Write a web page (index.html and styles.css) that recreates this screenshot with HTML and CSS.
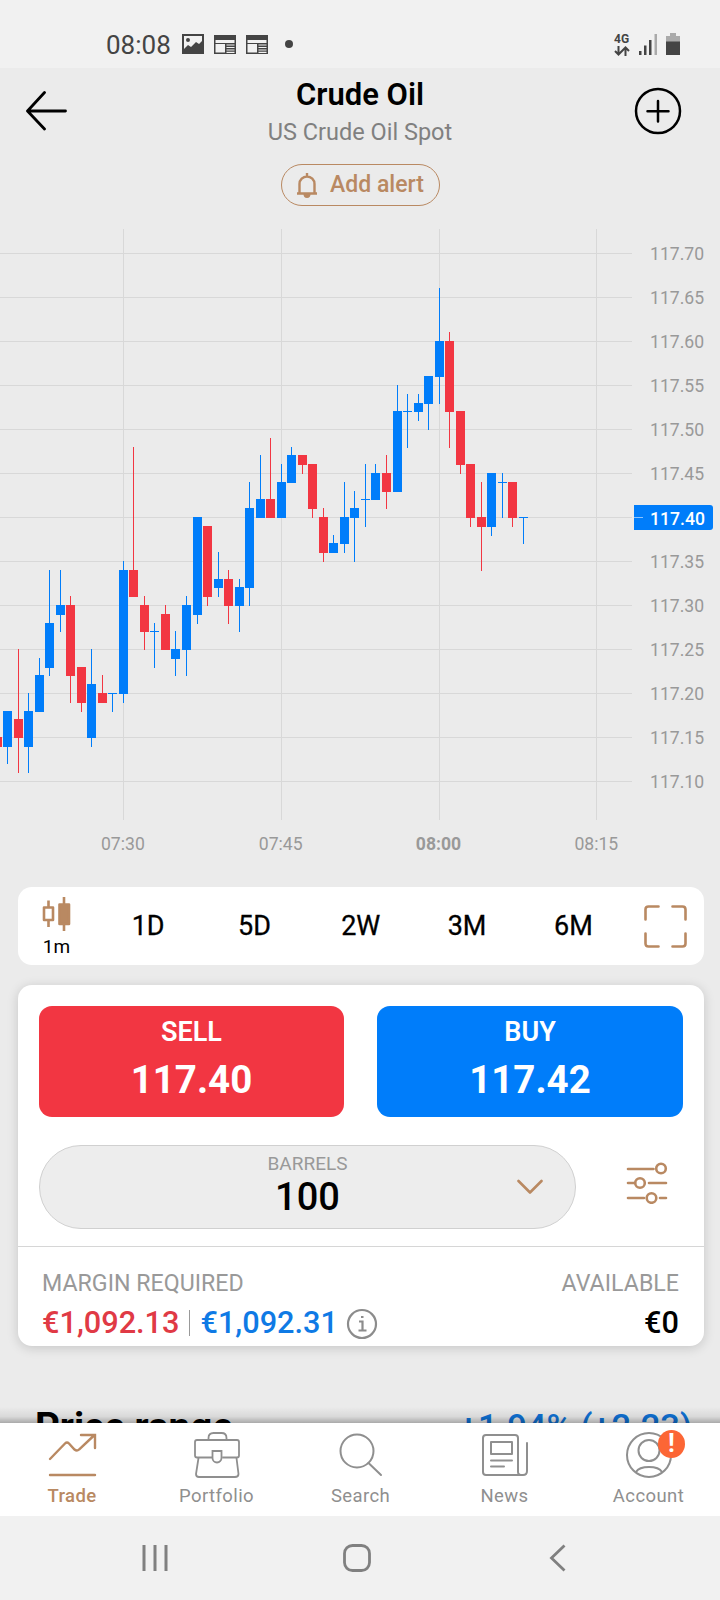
FILE: index.html
```html
<!DOCTYPE html>
<html lang="en">
<head>
    <meta charset="UTF-8">
    <meta name="viewport" content="width=device-width, initial-scale=1.0">
    <title>Crude Oil</title>
    <link rel="stylesheet" href="styles.css">
</head>
<body>
    <div class="status-bar">
        <div class="status-left">
            <span class="clock">08:08</span>
            <svg width="22" height="20" viewBox="0 0 22 20">
                <path fill="#444" fill-rule="evenodd" d="M0 0h22v20H0zM2 2v13l4-4 3 2 5-5 3 2 3-3V2zM4 6a2 2 0 1 0 4 0a2 2 0 1 0-4 0"/>
            </svg>
            <svg class="news-notice" width="22" height="19" viewBox="0 0 22 19">
                <path fill="#444" fill-rule="evenodd" d="M0 0h22v19H0zM1.500 5v3h19V5zM1.500 9v8.500H11V9z"/>
                <path stroke="#f1f1f1" stroke-width="1.200" d="M12.500 10h8M12.500 12.500h8M12.500 15h8M12.500 17.300h8"/>
            </svg>
            <svg class="news-notice" width="22" height="19" viewBox="0 0 22 19">
                <path fill="#444" fill-rule="evenodd" d="M0 0h22v19H0zM1.500 5v3h19V5zM1.500 9v8.500H11V9z"/>
                <path stroke="#f1f1f1" stroke-width="1.200" d="M12.500 10h8M12.500 12.500h8M12.500 15h8M12.500 17.300h8"/>
            </svg>
            <span class="dot"></span>
        </div>
        <div class="status-right">
            <div class="network">
                <span>4G</span>
                <svg width="16" height="10" viewBox="0 0 16 10" fill="none" stroke="#444" stroke-width="2">
                    <path d="M4.500 0v8M1 5l3.500 3.500L8 5M11.500 10V2M8 5l3.500-3.500L15 5"/>
                </svg>
            </div>
            <svg width="18" height="21" viewBox="0 0 18 21">
                <path fill="#444" d="M0 17h2.500v4H0zM5 11.500h2.500V21H5zM10 6h2.500v15H10z"/>
                <path fill="#aaa" d="M15.500 0H18v21h-2.500z"/>
            </svg>
            <svg width="14" height="22" viewBox="0 0 14 22">
                <path fill="#aaa" d="M4 0h6v3h4v6H0V3h4z"/>
                <path fill="#444" d="M0 8.500h14V22H0z"/>
            </svg>
        </div>
    </div>

    <main class="content">
        <div class="header">
            <svg class="back" width="42" height="42" viewBox="0 0 42 42" fill="none" stroke="#000" stroke-width="2.800" stroke-linecap="round" stroke-linejoin="round">
                <path d="M39.500 21H2M18.500 2.500L1.500 21l17 18"/>
            </svg>
            <div class="heading">
                <h1>Crude Oil</h1>
                <p>US Crude Oil Spot</p>
                <button class="alert-button">
                    <svg width="22" height="26" viewBox="0 0 22 26" fill="none" stroke="#b98962" stroke-width="2.400">
                        <path d="M1 20.500h20M3.500 20v-9a7.500 7.500 0 0 1 15 0v9M11 0v4"/>
                        <path fill="#b98962" stroke="none" d="M7.500 21h7a3.500 4 0 0 1-7 0z"/>
                    </svg>
                    Add alert
                </button>
            </div>
            <svg class="plus" width="48" height="48" viewBox="0 0 48 48" fill="none" stroke="#000" stroke-width="2.500" stroke-linecap="round">
                <circle cx="24" cy="24" r="22"/>
                <path d="M24 14v20.500M13.500 24.200h21"/>
            </svg>
        </div>

        <div class="chart">
            <svg id="plot" class="plot" width="633" height="591" viewBox="0 229 633 591" shape-rendering="crispEdges"></svg>
            <div class="price-axis">
                <span>117.70</span>
                <span>117.65</span>
                <span>117.60</span>
                <span>117.55</span>
                <span>117.50</span>
                <span>117.45</span>
                <span><b class="current-price">117.40</b></span>
                <span>117.35</span>
                <span>117.30</span>
                <span>117.25</span>
                <span>117.20</span>
                <span>117.15</span>
                <span>117.10</span>
            </div>
            <div class="time-axis">
                <span>07:30</span>
                <span>07:45</span>
                <span class="strong">08:00</span>
                <span>08:15</span>
            </div>
        </div>

        <div class="ranges">
            <div class="interval">
                <svg width="30" height="36" viewBox="0 0 30 36" fill="none" stroke="#b98962" stroke-width="2.600" stroke-linejoin="round">
                    <path d="M2 11.500h9v12.500H2zM6.500 4.500v7M6.500 24v7M22 1v7M22 28v7"/>
                    <path fill="#b98962" d="M17.500 8.500h9.500v19.500h-9.500z"/>
                </svg>
                <span>1m</span>
            </div>
            <span class="range">1D</span>
            <span class="range">5D</span>
            <span class="range">2W</span>
            <span class="range">3M</span>
            <span class="range">6M</span>
            <svg class="expand" width="43" height="43" viewBox="0 0 43 43" fill="none" stroke="#b98962" stroke-width="2.600" stroke-linecap="round">
                <path d="M1.500 14.500v-10q0-3 3-3h10M28.500 1.500h10q3 0 3 3v10M41.500 28.500v10q0 3-3 3h-10M14.500 41.500h-10q-3 0-3-3v-10"/>
            </svg>
        </div>

        <div class="ticket">
            <div class="deal-buttons">
                <button class="sell"><span>SELL</span><b>117.40</b></button>
                <button class="buy"><span>BUY</span><b>117.42</b></button>
            </div>
            <div class="amount-row">
                <div class="amount">
                    <span></span>
                    <div class="amount-value">
                        <span>BARRELS</span>
                        <b>100</b>
                    </div>
                    <svg width="26" height="16" viewBox="0 0 26 16" fill="none" stroke="#b98962" stroke-width="2.600" stroke-linecap="round" stroke-linejoin="round">
                        <path d="M1.500 2L13 13.500 24.500 2"/>
                    </svg>
                </div>
                <svg class="settings" width="42" height="42" viewBox="0 0 42 42" fill="none" stroke="#b98962" stroke-width="2.600" stroke-linecap="round">
                    <path d="M2 7h25.500M2 21h7M23 21h17M2 36h16M34 36h6"/>
                    <circle cx="35" cy="6.500" r="4.800"/>
                    <circle cx="14" cy="21" r="4.800"/>
                    <circle cx="25.500" cy="36" r="4.800"/>
                </svg>
            </div>
            <div class="funds">
                <div>
                    <p>MARGIN REQUIRED</p>
                    <div class="margin-values">
                        <span class="red">€1,092.13</span>
                        <i></i>
                        <span class="blue">€1,092.31</span>
                        <svg width="32" height="32" viewBox="0 0 32 32" fill="none" stroke="#8c8c8c" stroke-width="2.200">
                            <circle cx="16" cy="16" r="14"/>
                            <path d="M13 13.500h3.500v8.500M12.500 22.500h8M15 9h2.500"/>
                        </svg>
                    </div>
                </div>
                <div class="available">
                    <p>AVAILABLE</p>
                    <span>€0</span>
                </div>
            </div>
        </div>

        <div class="price-range">
            <h2>Price range</h2>
            <span>+1.94% (+2.23)</span>
        </div>
        <div class="nav-shadow"></div>
    </main>

    <nav class="tabs">
        <a class="tab active">
            <svg width="50" height="48" viewBox="0 0 50 48" fill="none" stroke="#b98962" stroke-width="2.400" stroke-linecap="round">
                <path d="M3 28L18 12.500q2-2 4 0l5.500 6q2.500 2 4.500 0L47.500 4M34 4h14v13M3 44h45"/>
            </svg>
            <span>Trade</span>
        </a>
        <a class="tab">
            <svg width="50" height="48" viewBox="0 0 50 48" fill="none" stroke="#8f8f8f" stroke-width="1.800">
                <path d="M16.500 9V7q0-5 5-5h8q5 0 5 5v2M20 26.500H5q-2 0-2-2V11q0-2 2-2h40q2 0 2 2v13.500q0 2-2 2H30.500M6.500 27L4 43q0 3 3 3h36q3.500 0 3.500-3L44.500 27M20.500 20h9v7a4.500 4.500 0 0 1-9 0z"/>
            </svg>
            <span>Portfolio</span>
        </a>
        <a class="tab">
            <svg width="50" height="48" viewBox="0 0 50 48" fill="none" stroke="#8f8f8f" stroke-width="2" stroke-linecap="round">
                <circle cx="21" cy="20" r="16.500"/>
                <path d="M32.500 32L45 44"/>
            </svg>
            <span>Search</span>
        </a>
        <a class="tab">
            <svg width="50" height="48" viewBox="0 0 50 48" fill="none" stroke="#8f8f8f" stroke-width="2" stroke-linecap="round" stroke-linejoin="round">
                <path d="M38 41V7q0-3-3-3H6Q3 4 3 7v34q0 3 3 3h37q4 0 4-4V12M38 41q0 3 4 3M11 11h21v12H11zM11 29.500h21M11 35.500h13"/>
            </svg>
            <span>News</span>
        </a>
        <a class="tab account">
            <svg width="50" height="48" viewBox="0 0 50 48" fill="none" stroke="#8f8f8f" stroke-width="2">
                <circle cx="25" cy="24" r="22"/>
                <circle cx="25" cy="19.500" r="10.500"/>
                <path d="M12 41q3-5 13-5t13 5"/>
            </svg>
            <span>Account</span>
            <b class="badge">!</b>
        </a>
    </nav>

    <div class="system-bar">
        <svg width="28" height="28" viewBox="0 0 28 28" stroke="#808080" stroke-width="3">
            <path d="M3 1v26M14 1v26M25 1v26"/>
        </svg>
        <svg width="28" height="28" viewBox="0 0 28 28" fill="none" stroke="#808080" stroke-width="2.800">
            <rect x="1.500" y="1.500" width="25" height="25" rx="8"/>
        </svg>
        <svg width="28" height="28" viewBox="0 0 28 28" fill="none" stroke="#808080" stroke-width="2.800">
            <path d="M20.500 1.500L7.500 14l13 12.500"/>
        </svg>
    </div>

    <script src="script.js"></script>
</body>
</html>
```

FILE: styles.css
```css
* {
    box-sizing: border-box;
}

body {
    margin: 0;
    height: 1600px;
    overflow: hidden;
    display: flex;
    flex-direction: column;
    font-family: Roboto, "Liberation Sans", sans-serif;
    background-color: #ebebeb;
    color: #000;
}

h1, h2, p {
    margin: 0;
}

button {
    font-family: inherit;
    cursor: pointer;
}

svg {
    display: block;
    flex-shrink: 0;
}

/* status bar */
.status-bar {
    height: 68px;
    flex-shrink: 0;
    display: flex;
    justify-content: space-between;
    padding: 32px 40px 0 106px;
    background-color: #f1f1f1;
    color: #444;
}

.status-left, .status-right {
    display: flex;
    align-items: center;
    height: 24px;
}

.clock {
    width: 76px;
    padding-top: 2px;
    font-size: 26px;
    line-height: 24px;
}

.news-notice {
    margin-left: 10px;
}

.dot {
    width: 8px;
    height: 8px;
    margin-left: 17px;
    border-radius: 50%;
    background-color: #444;
}

.network {
    width: 16px;
    margin-right: 9px;
    font-size: 12px;
    font-weight: 700;
    line-height: 13px;
}

.status-right svg + svg {
    margin-left: 9px;
}

/* instrument header */
.content {
    position: relative;
    height: 1355px;
    flex-shrink: 0;
    overflow: hidden;
}

.header {
    height: 161px;
    display: grid;
    grid-template-columns: 1fr 200px 1fr;
    padding: 0 38px 0 26px;
}

.back {
    margin-top: 22px;
}

.plus {
    margin-top: 19px;
    justify-self: end;
}

.heading {
    display: flex;
    flex-direction: column;
    align-items: center;
    padding-top: 8px;
    margin-left: 12px;
}

h1 {
    font-size: 31px;
    font-weight: 600;
    line-height: 37px;
}

.heading p {
    margin-top: 4px;
    font-size: 23.500px;
    line-height: 30px;
    color: #808080;
    white-space: nowrap;
}

.alert-button {
    width: 159px;
    height: 42px;
    margin-top: 17px;
    padding: 0 0 2px;
    display: flex;
    justify-content: center;
    align-items: center;
    gap: 12px;
    border: 1px solid #b98962;
    border-radius: 21px;
    background: none;
    font-size: 23px;
    font-weight: 500;
    color: #b98962;
    white-space: nowrap;
}

.alert-button svg {
    margin-top: 4px;
}

/* chart */
.chart {
    height: 658px;
    display: grid;
    grid-template-columns: 634px 86px;
    grid-template-rows: 591px 67px;
}

.price-axis {
    padding-top: 3px;
    font-size: 17.600px;
    color: #999;
}

.price-axis span {
    display: flex;
    align-items: center;
    height: 44px;
    padding-left: 16px;
}

.price-axis .current-price {
    width: 79px;
    height: 25px;
    flex-shrink: 0;
    margin: -1px 0 0 -16px;
    padding-left: 16px;
    line-height: 28px;
    border-radius: 0 3px 3px 0;
    font-weight: 500;
    color: #fff;
    background: linear-gradient(#8cc4ff, #8cc4ff) 0 12px / 9px 1px no-repeat #007dfa;
}

.time-axis {
    display: grid;
    grid-template-columns: repeat(4, 157.800px);
    padding: 13px 0 0 44px;
    font-size: 17.600px;
    line-height: 22px;
    text-align: center;
    color: #999;
}

.time-axis .strong {
    font-weight: 700;
}

.grid-line {
    stroke: #d8d8d8;
}

.up {
    fill: #007dfa;
}

.down {
    fill: #f23642;
}

/* ranges */
.ranges {
    width: 686px;
    height: 78px;
    margin-left: 18px;
    padding: 0 17px 0 16px;
    display: flex;
    align-items: center;
    border-radius: 14px;
    background-color: #fff;
}

.interval {
    width: 45px;
    margin-right: 16px;
    padding-top: 2px;
    display: flex;
    flex-direction: column;
    align-items: center;
    font-size: 19px;
    line-height: 24px;
}

.interval svg {
    margin-bottom: 3px;
}

.range {
    width: 106.300px;
    font-size: 27px;
    -webkit-text-stroke: 0.300px #000;
    text-align: center;
}

.expand {
    margin-left: auto;
}

/* deal ticket */
.ticket {
    width: 686px;
    height: 361px;
    margin: 20px 0 0 18px;
    border-radius: 14px;
    background-color: #fff;
    box-shadow: 0 2px 12px rgba(0, 0, 0, 0.16);
}

.deal-buttons {
    display: flex;
    justify-content: space-between;
    padding: 21px 21px 28px;
}

.deal-buttons button {
    width: 305px;
    height: 111px;
    padding: 0;
    display: flex;
    flex-direction: column;
    align-items: center;
    border: none;
    border-radius: 13px;
    color: #fff;
}

.deal-buttons .sell {
    background-color: #f23642;
}

.deal-buttons .buy {
    width: 306px;
    background-color: #007dfa;
}

.deal-buttons span {
    margin-top: 10px;
    font-size: 27px;
    font-weight: 600;
    line-height: 32px;
}

.deal-buttons b {
    margin-top: 9px;
    font-size: 38.500px;
    line-height: 46px;
}

.amount-row {
    height: 102px;
    padding: 0 36px 0 21px;
    display: flex;
    justify-content: space-between;
    border-bottom: 1px solid #d6d6d6;
}

.amount {
    width: 537px;
    height: 84px;
    display: grid;
    grid-template-columns: 1fr 160px 1fr;
    align-items: center;
    border: 1px solid #d0d0d0;
    border-radius: 42px;
    background-color: #ededed;
}

.amount svg {
    justify-self: end;
    margin-right: 32px;
}

.amount-value {
    display: flex;
    flex-direction: column;
    align-items: center;
    padding-bottom: 2px;
}

.amount-value span {
    font-size: 19px;
    line-height: 22px;
    color: #999;
}

.amount-value b {
    font-size: 38px;
    font-weight: 500;
    line-height: 44px;
}

.settings {
    margin-top: 17px;
}

.funds {
    display: flex;
    justify-content: space-between;
    padding: 20px 25px 0 24px;
    font-size: 30.700px;
    font-weight: 500;
    line-height: 36px;
}

.funds p {
    margin-bottom: 6px;
    font-size: 23.200px;
    font-weight: 400;
    line-height: 32px;
    color: #999;
}

.margin-values {
    display: flex;
    align-items: center;
}

.margin-values i {
    width: 1px;
    height: 26px;
    margin: 0 10px;
    background-color: #999;
}

.margin-values svg {
    margin: 2px 0 0 8px;
}

.red {
    color: #e03a45;
}

.blue {
    color: #0f7ae5;
}

.available {
    text-align: right;
}

.price-range {
    display: flex;
    justify-content: space-between;
    padding: 59px 28px 0 35px;
    line-height: 44px;
}

h2 {
    font-size: 38.500px;
}

.price-range span {
    font-size: 34.500px;
    font-weight: 500;
    color: #0f72d6;
}

.nav-shadow {
    position: absolute;
    left: 0;
    right: 0;
    bottom: 0;
    height: 16px;
    background: linear-gradient(rgba(0, 0, 0, 0), rgba(0, 0, 0, 0.08) 60%, rgba(0, 0, 0, 0.28));
}

/* bottom navigation */
.tabs {
    height: 93px;
    flex-shrink: 0;
    display: grid;
    grid-template-columns: repeat(5, 1fr);
    background-color: #fff;
}

.tab {
    position: relative;
    display: flex;
    flex-direction: column;
    align-items: center;
    padding: 8px 0 0 1px;
    font-size: 18.500px;
    line-height: 24px;
    letter-spacing: 0.400px;
    color: #8f8f8f;
}

.tab span {
    margin-top: 5px;
}

.active {
    padding-left: 0;
    font-weight: 500;
    color: #b98962;
}

.badge {
    position: absolute;
    top: 7px;
    right: 35px;
    width: 27px;
    height: 28px;
    border-radius: 50%;
    font-size: 25px;
    line-height: 27px;
    text-align: center;
    letter-spacing: 0;
    color: #fff;
    background-color: #fc6635;
}

.system-bar {
    flex: 1;
    display: flex;
    justify-content: space-between;
    padding: 28px 148px 0 141px;
    background-color: #f1f1f1;
}
```

FILE: script.js
```js
const plot = document.getElementById('plot');

// one candle per minute, in cents over 117: [open, high, low, close]
const firstMinute = -12; // minutes from 07:30
const candles = [
    [15, 15, 14, 14], [14, 18, 12, 18], [17, 25, 11, 15], [14, 20, 11, 18],
    [18, 24, 18, 22], [23, 34, 22, 28], [29, 34, 27, 30], [30, 31, 19, 22],
    [23, 23, 18, 19], [15, 25, 14, 21], [20, 22, 19, 19], [20, 20, 18, 20],
    [20, 35, 19, 34], [34, 48, 31, 31], [30, 31, 25, 27], [27, 28, 23, 27],
    [29, 30, 25, 25], [24, 27, 22, 25], [25, 31, 22, 30], [29, 40, 28, 40],
    [39, 39, 30, 31], [32, 36, 31, 33], [33, 34, 28, 30], [30, 33, 27, 32],
    [32, 44, 30, 41], [40, 47, 40, 42], [42, 49, 40, 40], [40, 46, 40, 44],
    [44, 48, 44, 47], [47, 47, 45, 46], [46, 46, 40, 41], [40, 41, 35, 36],
    [36, 38, 36, 37], [37, 44, 36, 40], [40, 43, 35, 41], [42, 46, 39, 42],
    [42, 46, 42, 45], [45, 47, 41, 43], [43, 55, 43, 52], [52, 54, 48, 52],
    [52, 54, 51, 53], [53, 56, 50, 56], [56, 66, 53, 60], [60, 61, 48, 52],
    [52, 52, 45, 46], [46, 46, 39, 40], [40, 44, 34, 39], [39, 45, 38, 45],
    [44, 45, 40, 44], [44, 44, 39, 40], [40, 40, 37, 40]
];

function xOf(minute) {
    return Math.floor(123.35 + minute * 10.525);
}

function yOf(cents) {
    return Math.round(429 + (50 - cents) * 8.8);
}

function add(tag, attrs) {
    const el = document.createElementNS('http://www.w3.org/2000/svg', tag);
    for (const name in attrs) {
        el.setAttribute(name, attrs[name]);
    }
    plot.appendChild(el);
}

for (let cents = 10; cents <= 70; cents += 5) {
    const y = yOf(cents) + 0.5;
    add('line', { x1: 0, x2: 632, y1: y, y2: y, class: 'grid-line' });
}

for (let minute = 0; minute <= 45; minute += 15) {
    const x = xOf(minute) + 0.5;
    add('line', { x1: x, x2: x, y1: 229, y2: 820, class: 'grid-line' });
}

candles.forEach(([open, high, low, close], i) => {
    const x = xOf(firstMinute + i);
    const color = close < open ? 'down' : 'up';
    const top = yOf(Math.max(open, close));
    const bottom = yOf(Math.min(open, close));
    add('rect', { x: x, y: yOf(high), width: 1, height: yOf(low) - yOf(high) + 1, class: color });
    add('rect', { x: x - 4, y: top, width: 9, height: bottom - top + 1, class: color });
});
```
